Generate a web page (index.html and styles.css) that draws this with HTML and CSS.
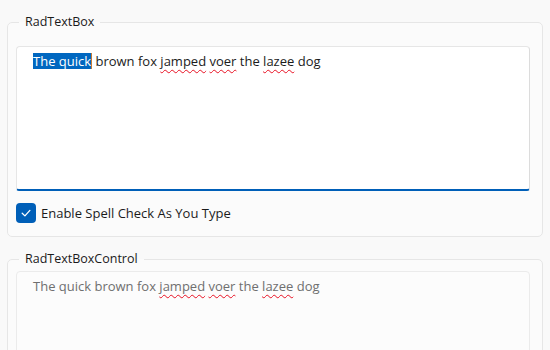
FILE: index.html
```html
<!DOCTYPE html>
<html lang="en">
<head>
  <meta charset="UTF-8" />
  <title>RadTextBox - Spell Check</title>
  <link rel="stylesheet" href="styles.css">
</head>
<body>
  <fieldset class="group">
    <legend>RadTextBox</legend>
    <div class="textbox focused">
      <span class="selected">The quick</span><span class="caret"></span> brown fox <span class="misspelled">jamped</span> <span class="misspelled">voer</span> the <span class="misspelled">lazee</span> dog
    </div>
    <label class="check-row">
      <span class="checkbox checked">
        <svg width="12" height="12" viewBox="0 0 12 12"><path d="M2.2 6.3 L4.9 8.9 L9.9 3.4" fill="none" stroke="#fff" stroke-width="1.3" stroke-linecap="round" stroke-linejoin="round"/></svg>
      </span>
      Enable Spell Check As You Type
    </label>
  </fieldset>

  <fieldset class="group second">
    <legend>RadTextBoxControl</legend>
    <div class="textbox readonly">
      The quick brown fox <span class="misspelled">jamped</span> <span class="misspelled">voer</span> the <span class="misspelled">lazee</span> dog
    </div>
  </fieldset>
</body>
</html>
```

FILE: styles.css
```css
:root {
  --page-bg: #f9f9f9;
  --group-bg: #fbfbfb;
  --border: #e6e6e6;
  --text: #1b1b1b;
  --muted: #6f6f6f;
  --accent: #005fb8;
  --select: #0067c0;
}

* {
  box-sizing: border-box;
}

body {
  margin: 0;
  padding: 14px 7px 0;
  background: var(--page-bg);
  color: var(--text);
  font-family: 'Segoe UI', 'Open Sans', sans-serif;
  font-size: 13px;
  overflow: hidden;
}

.group {
  margin: 0 0 14px;
  width: 536px;
  border: 1px solid var(--border);
  border-radius: 5px;
  background: var(--group-bg);
  padding: 16px 12px 13px 8px;
}

.group legend {
  margin-left: 3px;
  padding: 0 6px;
  line-height: 16px;
  font-size: 12.5px;
}

.second {
  padding-top: 4px;
}

.textbox {
  height: 145px;
  background: #fff;
  border: 1px solid var(--border);
  border-radius: 4px;
  padding: 6px 16px 5px;
  line-height: 16px;
  white-space: nowrap;
}

.textbox.focused {
  border-bottom: 2px solid var(--accent);
  border-bottom-left-radius: 3px;
  border-bottom-right-radius: 3px;
  border-right-color: #dcdcdc;
}

.selected {
  background: var(--select);
  color: #fff;
  display: inline-block;
}

.caret {
  display: inline-block;
  width: 1px;
  height: 16px;
  vertical-align: top;
  background: #c47a35;
}

.misspelled {
  text-decoration: underline wavy #e81123;
  text-decoration-thickness: 1px;
  text-underline-offset: 3px;
  text-decoration-skip-ink: none;
}

.check-row {
  display: flex;
  align-items: center;
  gap: 5px;
  margin-top: 12px;
  line-height: 20px;
}

.checkbox {
  width: 20px;
  height: 20px;
  border-radius: 4px;
  display: flex;
  align-items: center;
  justify-content: center;
}

.checkbox.checked {
  background: var(--accent);
}

.second .textbox {
  background: #fcfcfc;
  color: var(--muted);
  border-color: #ebebeb;
}
```
